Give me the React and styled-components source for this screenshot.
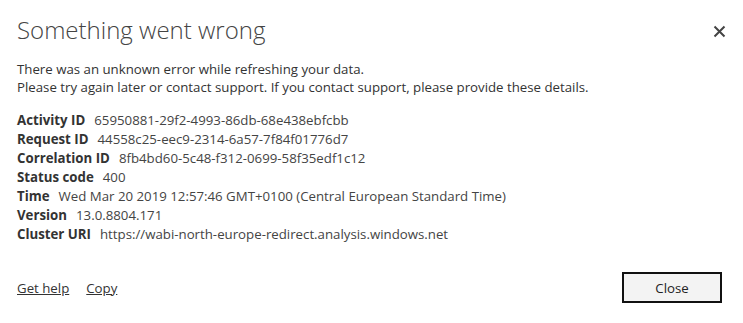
import * as React from "react";
import styled, { createGlobalStyle } from "styled-components";

const Global = createGlobalStyle`
  body {
    margin: 0;
    background: #fff;
    font-family: "Open Sans", "Noto Sans", sans-serif;
  }
`;

const Dialog = styled.div`
  width: 743px;
  height: 323px;
  box-sizing: border-box;
  padding: 14px 17px 0 17px;
  display: flex;
  flex-direction: column;
  color: #333;
`;

const Header = styled.div`
  display: flex;
  justify-content: space-between;
  align-items: flex-start;
`;

const Title = styled.h1`
  margin: 0;
  font-size: 24px;
  font-weight: 300;
  color: #444;
  line-height: 32px;
`;

const CloseX = styled.button`
  border: none;
  background: none;
  padding: 0;
  margin: 11px 0 0 0;
  width: 13px;
  height: 13px;
  display: flex;
`;

const Message = styled.p`
  margin: 14px 0 0 0;
  font-size: 13.25px;
  line-height: 18px;
  color: #333;
`;

const Details = styled.div`
  margin-top: 15px;
  display: flex;
  flex-direction: column;
`;

const Row = styled.div`
  font-size: 13.25px;
  line-height: 19px;
  color: #444;
`;

const Label = styled.span`
  font-weight: 700;
  color: #333;
  margin-right: 9px;
`;

const Footer = styled.div`
  margin-top: auto;
  margin-bottom: 20px;
  display: flex;
  align-items: center;
  justify-content: space-between;
`;

const Links = styled.div`
  display: flex;
  gap: 17px;
`;

const Link = styled.a`
  font-size: 13.25px;
  color: #333;
  text-decoration: underline;
  cursor: pointer;
`;

const Button = styled.button`
  width: 100px;
  height: 31px;
  margin-right: 4px;
  border: 2px solid #111;
  background: #f3f3f3;
  font-family: inherit;
  font-size: 13.25px;
  color: #222;
`;

const rows = [
  ["Activity ID", "65950881-29f2-4993-86db-68e438ebfcbb"],
  ["Request ID", "44558c25-eec9-2314-6a57-7f84f01776d7"],
  ["Correlation ID", "8fb4bd60-5c48-f312-0699-58f35edf1c12"],
  ["Status code", "400"],
  ["Time", "Wed Mar 20 2019 12:57:46 GMT+0100 (Central European Standard Time)"],
  ["Version", "13.0.8804.171"],
  ["Cluster URI", "https://wabi-north-europe-redirect.analysis.windows.net"],
];

export default function App() {
  return (
    <>
      <Global />
      <Dialog>
        <Header>
          <Title>Something went wrong</Title>
          <CloseX aria-label="Close">
            <svg width="13" height="13" viewBox="0 0 13 13">
              <path d="M1.5 1.5 L11.5 11.5 M11.5 1.5 L1.5 11.5" stroke="#444" strokeWidth="2" />
            </svg>
          </CloseX>
        </Header>
        <Message>
          There was an unknown error while refreshing your data.
          <br />
          Please try again later or contact support. If you contact support, please provide these details.
        </Message>
        <Details>
          {rows.map(([k, v]) => (
            <Row key={k}>
              <Label>{k}</Label>
              {v}
            </Row>
          ))}
        </Details>
        <Footer>
          <Links>
            <Link>Get help</Link>
            <Link>Copy</Link>
          </Links>
          <Button>Close</Button>
        </Footer>
      </Dialog>
    </>
  );
}
